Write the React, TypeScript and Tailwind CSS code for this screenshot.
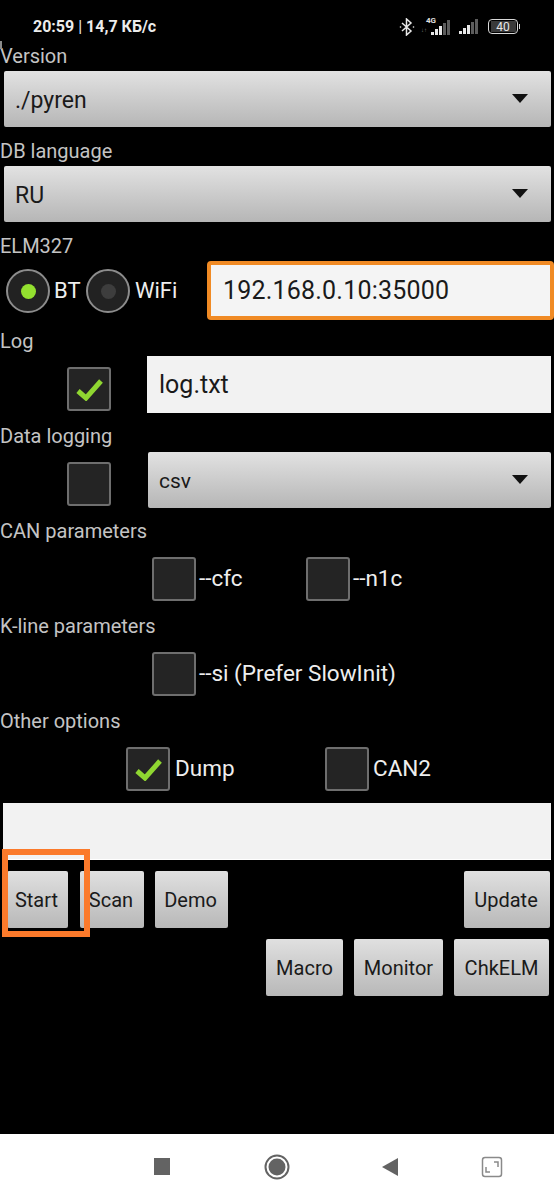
import { ReactNode } from "react";

const font = "font-['Roboto','Noto_Sans',sans-serif]";

function Label({ children }: { children: ReactNode }) {
  return <div className="h-6 mb-[3px] text-[20px] leading-6 text-[#c4c4c4]">{children}</div>;
}

function Spinner({ text, className, small }: { text: string; className: string; small?: boolean }) {
  return (
    <div className={`h-14 flex items-center justify-between rounded-[2px] bg-gradient-to-b from-[#e2e2e2] to-[#b6b6b6] text-[#1a1a1a] ${small ? "text-[21px]" : "text-[23px]"} pl-[11px] pr-[23px] ${className}`}>
      <span className="pt-1">{text}</span>
      <svg width="16" height="10" viewBox="0 0 16 10"><path d="M0 0h16L8 9z" fill="#111" /></svg>
    </div>
  );
}

function Check({ checked, className = "" }: { checked?: boolean; className?: string }) {
  return (
    <div className={`w-11 h-11 shrink-0 flex items-center justify-center rounded-[3px] border-2 border-[#6e6e6e] bg-[#242424] ${className}`}>
      {checked && (
        <svg width="28" height="24" viewBox="0 0 28 24">
          <path d="M3 14l8 7L26 4" fill="none" stroke="#8fd631" strokeWidth="5" />
        </svg>
      )}
    </div>
  );
}

function Radio({ on }: { on?: boolean }) {
  return (
    <div className="w-11 h-11 shrink-0 mt-2 flex items-center justify-center rounded-full border-2 border-[#8c8c8c] bg-[#222222]">
      <div className={`w-[15px] h-[15px] rounded-full ${on ? "bg-[#93e02f]" : "bg-[#3d3d3d]"}`} />
    </div>
  );
}

function Btn({ text, className }: { text: string; className: string }) {
  return (
    <div className={`h-[57px] flex items-center justify-center rounded-[2px] bg-gradient-to-b from-[#e0e0e0] to-[#b8b8b8] text-[20px] text-[#1a1a1a] ${className}`}>
      {text}
    </div>
  );
}

function Bars({ className = "" }: { className?: string }) {
  return (
    <svg width="20" height="15" viewBox="0 0 20 15" className={className}>
      <rect x="0" y="12" width="3" height="3" fill="#e8e8e8" />
      <rect x="4" y="9" width="3" height="6" fill="#e8e8e8" />
      <rect x="8" y="6" width="3" height="9" fill="#e8e8e8" />
      <rect x="12" y="3" width="3" height="12" fill="#5c5c5c" />
      <rect x="16" y="0" width="3" height="15" fill="#5c5c5c" />
    </svg>
  );
}

export default function App() {
  return (
    <div className={`relative w-[554px] h-[1200px] bg-black overflow-hidden flex flex-col ${font}`}>
      <div className="h-11 shrink-0 flex items-center pl-[33px] pr-[34px] pt-[9px] text-white">
        <span className="text-[16px] font-bold text-[#ececec]">20:59 <span className="font-normal">|</span> 14,7 КБ/с</span>
        <div className="ml-auto flex items-center">
          <svg width="16" height="18" viewBox="0 0 16 18" fill="none" stroke="#e8e8e8" strokeWidth="1.5">
            <path d="M3 5l9 8-4.500 4V1L12 5l-9 8" />
            <circle cx="1.500" cy="9" r="0.800" fill="#e8e8e8" stroke="none" />
            <circle cx="14.500" cy="9" r="0.800" fill="#e8e8e8" stroke="none" />
          </svg>
          <div className="relative ml-[5px] w-8 h-[17px]">
            <span className="absolute left-[6px] -top-[3px] text-[8px] font-bold text-[#e0e0e0]">4G</span>
            <span className="absolute left-[1px] top-[7px] text-[6px] text-[#777777]">↓↑</span>
            <Bars className="absolute left-[11px] top-[2px]" />
          </div>
          <Bars className="ml-[7px]" />
          <div className="ml-[9px] w-[30px] h-[15px] flex items-center justify-center rounded-[4px] border border-[#d8d8d8] text-[12px] leading-none text-[#e8e8e8]">
            <span className="w-[25px] h-[11px] flex items-center justify-center bg-[#3a3a3a]">40</span>
          </div>
          <div className="ml-[1px] w-[1px] h-[5px] bg-[#d8d8d8]" />
        </div>
      </div>

      <div className="h-[95px] shrink-0">
        <Label>Version</Label>
        <Spinner text="./pyren" className="ml-1 w-[547px]" />
      </div>
      <div className="h-[95px] shrink-0">
        <Label>DB language</Label>
        <Spinner text="RU" className="ml-1 w-[547px]" />
      </div>
      <div className="h-[95px] shrink-0">
        <Label>ELM327</Label>
        <div className="flex items-start h-[58px] pl-[6px] text-[22px] leading-6 text-[#eeeeee]">
          <Radio on />
          <span className="ml-1 mt-[18px] w-8">BT</span>
          <Radio />
          <span className="ml-[5px] mt-[18px] w-[42px]">WiFi</span>
          <div className="ml-[30px] w-[347px] h-[59px] flex items-center pl-3 rounded-[4px] border-4 border-[#f08a24] bg-[#f4f4f4] text-[25px] tracking-[0.2px] text-[#1a1a1a]">
            192.168.0.10:35000
          </div>
        </div>
      </div>
      <div className="h-[95px] shrink-0">
        <Label>Log</Label>
        <div className="flex items-start pl-[67px]">
          <Check checked className="mt-[11px]" />
          <div className="ml-9 w-[404px] h-[57px] flex items-center pl-3 bg-[#f2f2f2] text-[25px] text-[#1a1a1a]">log.txt</div>
        </div>
      </div>
      <div className="h-[95px] shrink-0">
        <Label>Data logging</Label>
        <div className="flex items-start pl-[67px]">
          <Check className="mt-[11px]" />
          <Spinner text="csv" small className="ml-[37px] mt-px w-[403px]" />
        </div>
      </div>
      <div className="h-[95px] shrink-0">
        <Label>CAN parameters</Label>
        <div className="flex items-center pl-[152px] pt-[11px] text-[22.500px] text-[#eeeeee]">
          <Check />
          <span className="ml-[3px] w-[107px]">--cfc</span>
          <Check />
          <span className="ml-[3px]">--n1c</span>
        </div>
      </div>
      <div className="h-[95px] shrink-0">
        <Label>K-line parameters</Label>
        <div className="flex items-center pl-[152px] pt-[11px] text-[22.500px] text-[#eeeeee]">
          <Check />
          <span className="ml-[3px]">--si (Prefer SlowInit)</span>
        </div>
      </div>
      <div className="h-[94px] shrink-0">
        <Label>Other options</Label>
        <div className="flex items-center pl-[126px] pt-[11px] text-[22.500px] text-[#eeeeee]">
          <Check checked />
          <span className="ml-[5px] w-[150px]">Dump</span>
          <Check />
          <span className="ml-1">CAN2</span>
        </div>
      </div>

      <div className="ml-[3px] w-[548px] h-[57px] shrink-0 bg-[#f2f2f2] border-b border-white" />

      <div className="flex items-start mt-[11px] pl-[7px] shrink-0">
        <Btn text="Start" className="w-[61px] pr-[2px]" />
        <Btn text="Scan" className="ml-3 w-16 pr-[2px]" />
        <Btn text="Demo" className="ml-[11px] w-[73px] pr-[2px]" />
        <Btn text="Update" className="ml-auto mr-1 w-[86px] pr-[2px]" />
      </div>
      <div className="flex justify-end mt-[11px] pr-[5px] gap-[11px] shrink-0">
        <Btn text="Macro" className="w-[77px]" />
        <Btn text="Monitor" className="w-[89px]" />
        <Btn text="ChkELM" className="w-[95px]" />
      </div>

      <div className="mt-auto h-[66px] shrink-0 bg-white">
        <svg width="554" height="66" viewBox="0 0 554 66">
          <rect x="154" y="24" width="16" height="17" fill="#636363" />
          <circle cx="277" cy="33" r="11.500" fill="none" stroke="#636363" strokeWidth="2" />
          <circle cx="277" cy="33" r="8.500" fill="#636363" />
          <path d="M382 33l16-9v18z" fill="#636363" />
          <rect x="482.500" y="23.500" width="19" height="19" rx="2.500" fill="none" stroke="#8a8a8a" strokeWidth="1.500" />
          <path d="M486 33v5h4M498 33v-5h-4" fill="none" stroke="#8a8a8a" strokeWidth="1.500" />
        </svg>
      </div>

      {/* orange annotation drawn over the Start button */}
      <div className="absolute left-[2px] top-[849px] w-[88px] h-[88px] border-[6px] border-[#fb7a2b]" />
      <div className="absolute left-0 top-[41px] w-[2px] h-[8px] bg-[#8a8a8a]" />
    </div>
  );
}
